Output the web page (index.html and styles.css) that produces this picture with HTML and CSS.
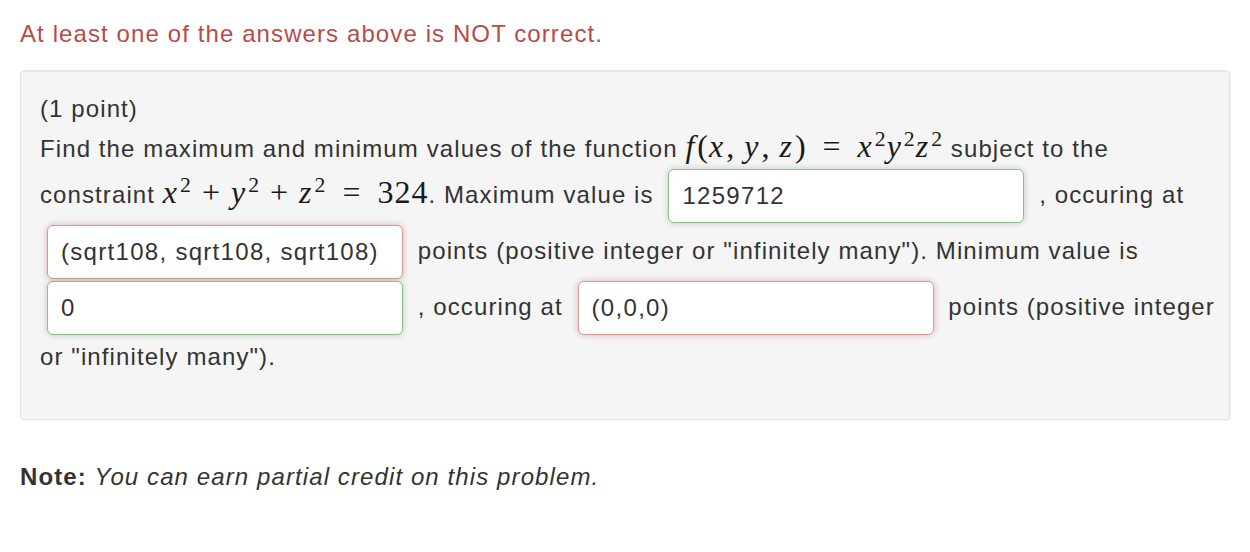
FILE: index.html
```html
<!DOCTYPE html>
<html>
<head>
<meta charset="utf-8">
<link rel="stylesheet" href="styles.css">
</head>
<body>
<div class="page">
  <div class="status">At least one of the answers above is NOT correct.</div>
  <div class="well">
    <div class="problem">(1 point)<br>Find the maximum and minimum values of the function <span class="math"><i>f</i>(<i>x</i>,<span class="thin"></span><i>y</i>,<span class="thin"></span><i>z</i>)<span class="rel">=</span><i>x</i><sup>2</sup><i>y</i><sup>2</sup><i>z</i><sup>2</sup></span> subject to the<br>constraint <span class="math"><i>x</i><sup>2</sup><span class="bin">+</span><i>y</i><sup>2</sup><span class="bin">+</span><i>z</i><sup>2</sup><span class="rel">=</span>324</span>. Maximum value is <input class="ans ok" type="text" value="1259712"> , occuring at<br><input class="ans bad" type="text" value="(sqrt108, sqrt108, sqrt108)"> points (positive integer or "infinitely many"). Minimum value is<br><input class="ans ok" type="text" value="0"> , occuring at <input class="ans bad" type="text" value="(0,0,0)"> points (positive integer<br>or "infinitely many").</div>
  </div>
  <div class="note"><b>Note:</b> <i>You can earn partial credit on this problem.</i></div>
</div>
</body>
</html>
```
FILE: styles.css
```css
html, body {
  margin: 0;
  padding: 0;
  background: #ffffff;
}
.page {
  padding: 19px 20px 0 20px;
  font-family: "Liberation Sans", Arial, sans-serif;
  font-size: 24px;
  letter-spacing: 1.1px;
  color: #333333;
}
.status {
  color: #b94a48;
  line-height: 30px;
  margin-bottom: 21px;
}
.well {
  width: 1210px;
  box-sizing: border-box;
  background: #f5f5f5;
  border: 1px solid #e3e3e3;
  border-radius: 4px;
  box-shadow: inset 0 1px 1px rgba(0,0,0,0.05), 1px 1px 2px rgba(0,0,0,0.06);
  padding: 18px 19px 42px 19px;
}
.problem {
  line-height: 40px;
  white-space: nowrap;
}
.math {
  font-family: "Liberation Serif", "Times New Roman", serif;
  font-size: 32px;
  line-height: 1;
  letter-spacing: 1px;
  color: #1a1a1a;
}
.math i {
  font-style: italic;
  margin-right: 2px;
}
.math sup {
  font-size: 0.68em;
  line-height: 0;
  vertical-align: 0.5em;
  margin-left: 0;
}
.thin {
  display: inline-block;
  width: 9px;
}
.rel {
  margin: 0 16px;
}
.bin {
  margin: 0 10px;
}
.ans {
  box-sizing: border-box;
  width: 356px;
  height: 54px;
  margin: 0 7px 2px 7px;
  padding: 0 13px;
  vertical-align: middle;
  font-family: "Liberation Sans", Arial, sans-serif;
  font-size: 24px;
  letter-spacing: 1.3px;
  color: #333;
  background: #ffffff;
  border-radius: 6px;
  outline: none;
}
.ans.ok {
  border: 1px solid #8cbf8c;
  box-shadow: 0 0 6px rgba(70,136,71,0.35);
}
.ans.bad {
  border: 1px solid #d49a99;
  box-shadow: 0 0 6px rgba(185,74,72,0.4);
}
.note {
  margin-top: 37px;
  line-height: 40px;
}
.note b {
  font-weight: bold;
}
```
